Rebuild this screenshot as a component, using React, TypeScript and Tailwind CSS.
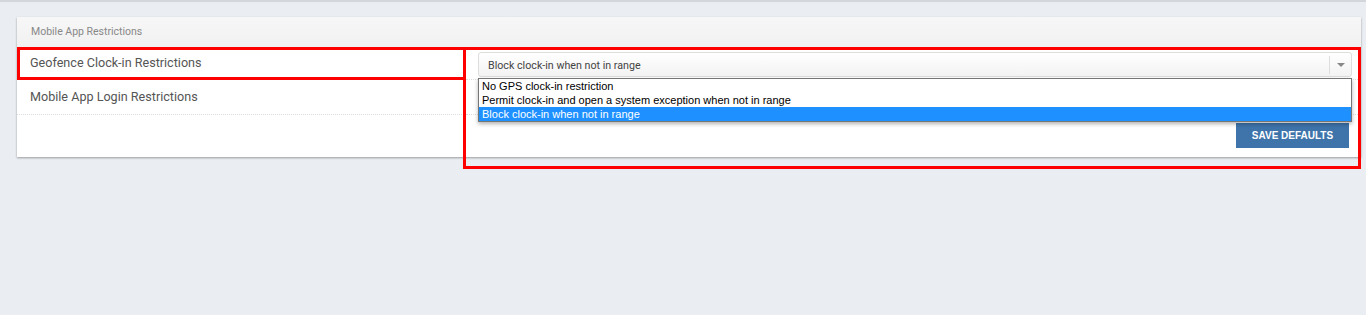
export default function App() {
  const options = [
    "No GPS clock-in restriction",
    "Permit clock-in and open a system exception when not in range",
    "Block clock-in when not in range",
  ];
  const selected = 2;

  return (
    <div className="min-h-[315px] bg-[#eaedf1] border-t-2 border-[#d3d6da] pt-[15px] pl-[17px] pr-[5px] font-['Roboto',sans-serif]">
      <div className="bg-white shadow-[0_1px_2px_rgba(0,0,0,0.35)]">
        <div className="h-[30px] flex items-center px-[14px] bg-gradient-to-b from-[#f7f7f7] to-[#f1f1f1] text-[10.5px] text-[#888]">
          Mobile App Restrictions
        </div>
        <div className="flex h-[110px]">
          <div className="w-[449px] flex flex-col">
            <div className="h-[33px] border-[3px] border-[#ff0000] flex items-center pl-[10px] text-[12.6px] text-[#555]">
              Geofence Clock-in Restrictions
            </div>
            <div className="h-[35px] border-b border-dotted border-[#ddd] flex items-center pl-[13px] text-[12.6px] text-[#555]">
              Mobile App Login Restrictions
            </div>
          </div>
          <div className="flex-1 ml-[-3px] h-[122px] mb-[-12px] border-[3px] border-[#ff0000] relative z-10 flex flex-col">
            <div className="h-[30px] border-b border-dotted border-[#ddd] pt-[2px] pl-[12px] pr-[6px]">
              <div className="relative h-[25px] rounded-[3px] border border-[#ddd] bg-gradient-to-b from-white to-[#f3f3f3] flex items-center">
                <span className="pl-[9px] pt-[3px] text-[10.7px] text-[#444] flex-1">Block clock-in when not in range</span>
                <div className="w-[22px] h-[18px] border-l border-[#ddd] flex items-center justify-center">
                  <div className="w-0 h-0 border-l-[4px] border-r-[4px] border-t-[4px] border-l-transparent border-r-transparent border-t-[#888]" />
                </div>
                <div className="absolute left-[-1px] right-[-1px] top-[25px] bg-white border border-[#767676] shadow-[0_2px_4px_rgba(0,0,0,0.3)] font-['Liberation_Sans',Arial,sans-serif] text-[11px] text-black z-20">
                  {options.map((o, i) => (
                    <div
                      key={o}
                      className={`h-[14px] leading-[14px] pl-[3px] ${i === selected ? "bg-[#1e90ff] text-white" : ""}`}
                    >
                      {o}
                    </div>
                  ))}
                </div>
              </div>
            </div>
            <div className="h-[35px] border-b border-dotted border-[#ddd]" />
            <div className="flex justify-end pr-[9px] pt-[8px]">
              <button className="w-[113px] h-[25px] bg-[#3e74aa] text-white text-[10px] font-bold uppercase font-['Liberation_Sans',Arial,sans-serif]">
                Save Defaults
              </button>
            </div>
          </div>
        </div>
      </div>
    </div>
  );
}
